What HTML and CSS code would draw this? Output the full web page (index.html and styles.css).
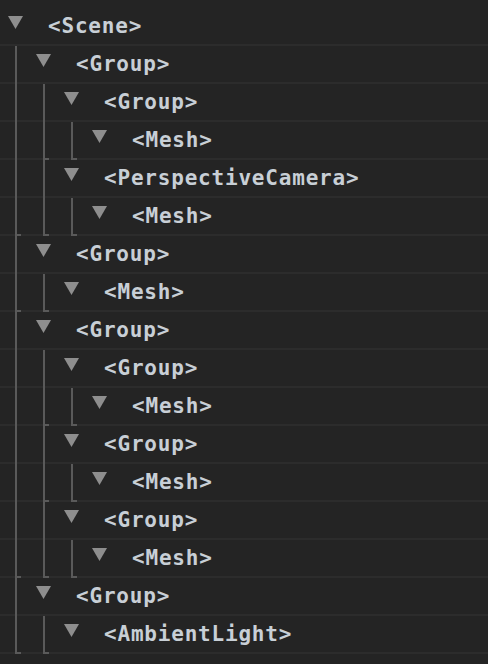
FILE: index.html
```html
<!DOCTYPE html>
<html>
<head>
<meta charset="utf-8">
<link rel="stylesheet" href="styles.css">
</head>
<body>
<div class="tree">
  <div class="node root">
    <div class="row"><svg class="tri" viewBox="0 0 15 13"><polygon points="0,0 15,0 7.5,13"/></svg><span class="tag">&lt;Scene&gt;</span></div>
    <div class="children">
      <div class="node">
        <div class="row"><svg class="tri" viewBox="0 0 15 13"><polygon points="0,0 15,0 7.5,13"/></svg><span class="tag">&lt;Group&gt;</span></div>
        <div class="children">
          <div class="node">
            <div class="row"><svg class="tri" viewBox="0 0 15 13"><polygon points="0,0 15,0 7.5,13"/></svg><span class="tag">&lt;Group&gt;</span></div>
            <div class="children">
              <div class="node">
                <div class="row"><svg class="tri" viewBox="0 0 15 13"><polygon points="0,0 15,0 7.5,13"/></svg><span class="tag">&lt;Mesh&gt;</span></div>
              </div>
            </div>
          </div>
          <div class="node">
            <div class="row"><svg class="tri" viewBox="0 0 15 13"><polygon points="0,0 15,0 7.5,13"/></svg><span class="tag">&lt;PerspectiveCamera&gt;</span></div>
            <div class="children">
              <div class="node">
                <div class="row"><svg class="tri" viewBox="0 0 15 13"><polygon points="0,0 15,0 7.5,13"/></svg><span class="tag">&lt;Mesh&gt;</span></div>
              </div>
            </div>
          </div>
        </div>
      </div>
      <div class="node">
        <div class="row"><svg class="tri" viewBox="0 0 15 13"><polygon points="0,0 15,0 7.5,13"/></svg><span class="tag">&lt;Group&gt;</span></div>
        <div class="children">
          <div class="node">
            <div class="row"><svg class="tri" viewBox="0 0 15 13"><polygon points="0,0 15,0 7.5,13"/></svg><span class="tag">&lt;Mesh&gt;</span></div>
          </div>
        </div>
      </div>
      <div class="node">
        <div class="row"><svg class="tri" viewBox="0 0 15 13"><polygon points="0,0 15,0 7.5,13"/></svg><span class="tag">&lt;Group&gt;</span></div>
        <div class="children">
          <div class="node">
            <div class="row"><svg class="tri" viewBox="0 0 15 13"><polygon points="0,0 15,0 7.5,13"/></svg><span class="tag">&lt;Group&gt;</span></div>
            <div class="children">
              <div class="node">
                <div class="row"><svg class="tri" viewBox="0 0 15 13"><polygon points="0,0 15,0 7.5,13"/></svg><span class="tag">&lt;Mesh&gt;</span></div>
              </div>
            </div>
          </div>
          <div class="node">
            <div class="row"><svg class="tri" viewBox="0 0 15 13"><polygon points="0,0 15,0 7.5,13"/></svg><span class="tag">&lt;Group&gt;</span></div>
            <div class="children">
              <div class="node">
                <div class="row"><svg class="tri" viewBox="0 0 15 13"><polygon points="0,0 15,0 7.5,13"/></svg><span class="tag">&lt;Mesh&gt;</span></div>
              </div>
            </div>
          </div>
          <div class="node">
            <div class="row"><svg class="tri" viewBox="0 0 15 13"><polygon points="0,0 15,0 7.5,13"/></svg><span class="tag">&lt;Group&gt;</span></div>
            <div class="children">
              <div class="node">
                <div class="row"><svg class="tri" viewBox="0 0 15 13"><polygon points="0,0 15,0 7.5,13"/></svg><span class="tag">&lt;Mesh&gt;</span></div>
              </div>
            </div>
          </div>
        </div>
      </div>
      <div class="node">
        <div class="row"><svg class="tri" viewBox="0 0 15 13"><polygon points="0,0 15,0 7.5,13"/></svg><span class="tag">&lt;Group&gt;</span></div>
        <div class="children">
          <div class="node">
            <div class="row"><svg class="tri" viewBox="0 0 15 13"><polygon points="0,0 15,0 7.5,13"/></svg><span class="tag">&lt;AmbientLight&gt;</span></div>
          </div>
        </div>
      </div>
    </div>
  </div>
</div>
</body>
</html>
```
FILE: styles.css
```css
html, body {
  margin: 0;
  padding: 0;
}
body {
  height: 664px;
  overflow: hidden;
  background-color: #242424;
  background-image: repeating-linear-gradient(to bottom, #242424 0, #242424 36px, #2c2c2c 36px, #2c2c2c 38px);
  background-position: 0 8px;
  font-family: "DejaVu Sans Mono", "Liberation Mono", monospace;
  font-weight: bold;
  color: #c8cfd6;
}
.tree {
  padding-top: 8px;
}
.row {
  display: flex;
  align-items: flex-start;
  height: 38px;
  box-sizing: border-box;
  padding-top: 2px;
  padding-left: 19px;
}
.root > .row {
  padding-left: 8px;
}
.tri {
  width: 15px;
  height: 13px;
  margin-top: 6px;
  fill: #8e8e8e;
  flex: none;
}
.tag {
  margin-left: 25px;
  font-size: 21px;
  line-height: 33px;
  letter-spacing: 0.8px;
  white-space: nowrap;
}
.children {
  margin-left: 26px;
  border-left: 2px solid #5a5a5a;
}
.root > .children {
  margin-left: 15px;
}
.children > .node {
  position: relative;
}
.children > .node::after {
  content: "";
  position: absolute;
  left: -2px;
  bottom: 0;
  width: 6px;
  height: 2px;
  background: #5a5a5a;
}
```
